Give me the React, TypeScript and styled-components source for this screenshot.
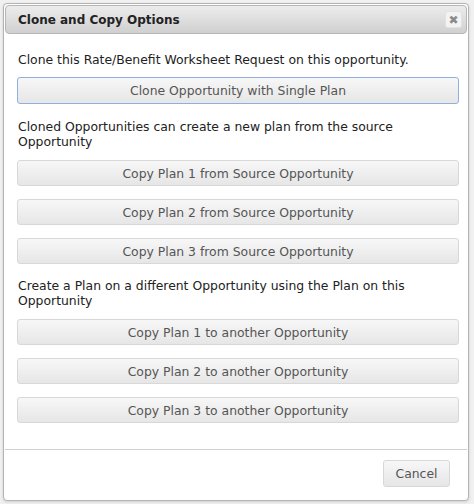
import React from 'react';
import styled, { createGlobalStyle } from 'styled-components';

const GlobalStyle = createGlobalStyle`
  html, body {
    margin: 0;
    padding: 0;
    background: #f1f1f1;
  }
  body {
    font-family: "DejaVu Sans", Verdana, sans-serif;
  }
`;

const Page = styled.div`
  width: 474px;
  height: 504px;
  padding: 3px;
  box-sizing: border-box;
`;

const Dialog = styled.div`
  width: 466px;
  height: 498px;
  box-sizing: border-box;
  border: 1px solid #b4b4b4;
  border-radius: 4px;
  background: #fff;
  padding: 1px;
  display: flex;
  flex-direction: column;
  box-shadow: 0 1px 3px rgba(0, 0, 0, 0.15);
`;

const TitleBar = styled.div`
  height: 29px;
  box-sizing: border-box;
  border: 1px solid #b6b6b6;
  border-radius: 4px;
  background: linear-gradient(#ececec, #d0d0d0);
  display: flex;
  align-items: center;
  justify-content: space-between;
  padding: 0 4px 0 12px;
`;

const Title = styled.span`
  font-size: 12px;
  font-weight: bold;
  color: #222;
`;

const CloseButton = styled.button`
  width: 17px;
  height: 17px;
  padding: 0;
  border: 1px solid #e2e2e2;
  border-radius: 3px;
  background: #f3f3f3;
  color: #8a8a8a;
  font-size: 12px;
  line-height: 14px;
  font-weight: bold;
  font-family: "DejaVu Sans", sans-serif;
  cursor: pointer;
`;

const Content = styled.div`
  flex: 1;
  padding: 18px 8px 0 12px;
  display: flex;
  flex-direction: column;
`;

const Text = styled.p<{ $gap: number }>`
  margin: 0 0 ${(p) => p.$gap}px 1px;
  font-size: 12.4px;
  line-height: 15px;
  color: #222;
`;

const ActionButton = styled.button<{ $focused?: boolean; $gap?: number }>`
  height: ${(p) => (p.$focused ? 27 : 26)}px;
  width: 100%;
  flex-shrink: 0;
  margin: 0 0 ${(p) => p.$gap ?? 13}px 0;
  border: 1px solid ${(p) => (p.$focused ? '#8fb0dc' : '#d8d8d8')};
  border-radius: 3px;
  background: linear-gradient(#f7f7f7, #e6e6e6);
  color: #555;
  font-family: "DejaVu Sans", Verdana, sans-serif;
  font-size: 12.4px;
  cursor: pointer;
`;

const Footer = styled.div`
  border-top: 1px solid #d0d0d0;
  height: 50px;
  box-sizing: border-box;
  padding: 10px 17px 0 0;
  display: flex;
  justify-content: flex-end;
  align-items: flex-start;
`;

const CancelButton = styled.button`
  width: 67px;
  height: 27px;
  border: 1px solid #d8d8d8;
  border-radius: 3px;
  background: linear-gradient(#f7f7f7, #e6e6e6);
  color: #555;
  font-family: "DejaVu Sans", Verdana, sans-serif;
  font-size: 12.4px;
  cursor: pointer;
`;

export default function App() {
  return (
    <Page>
      <GlobalStyle />
      <Dialog>
        <TitleBar>
          <Title>Clone and Copy Options</Title>
          <CloseButton aria-label="close">✖</CloseButton>
        </TitleBar>
        <Content>
          <Text $gap={10}>Clone this Rate/Benefit Worksheet Request on this opportunity.</Text>
          <ActionButton $focused $gap={15}>Clone Opportunity with Single Plan</ActionButton>
          <Text $gap={11}>
            Cloned Opportunities can create a new plan from the source Opportunity
          </Text>
          <ActionButton>Copy Plan 1 from Source Opportunity</ActionButton>
          <ActionButton>Copy Plan 2 from Source Opportunity</ActionButton>
          <ActionButton $gap={14}>Copy Plan 3 from Source Opportunity</ActionButton>
          <Text $gap={11}>
            Create a Plan on a different Opportunity using the Plan on this Opportunity
          </Text>
          <ActionButton>Copy Plan 1 to another Opportunity</ActionButton>
          <ActionButton>Copy Plan 2 to another Opportunity</ActionButton>
          <ActionButton $gap={0}>Copy Plan 3 to another Opportunity</ActionButton>
        </Content>
        <Footer>
          <CancelButton>Cancel</CancelButton>
        </Footer>
      </Dialog>
    </Page>
  );
}
